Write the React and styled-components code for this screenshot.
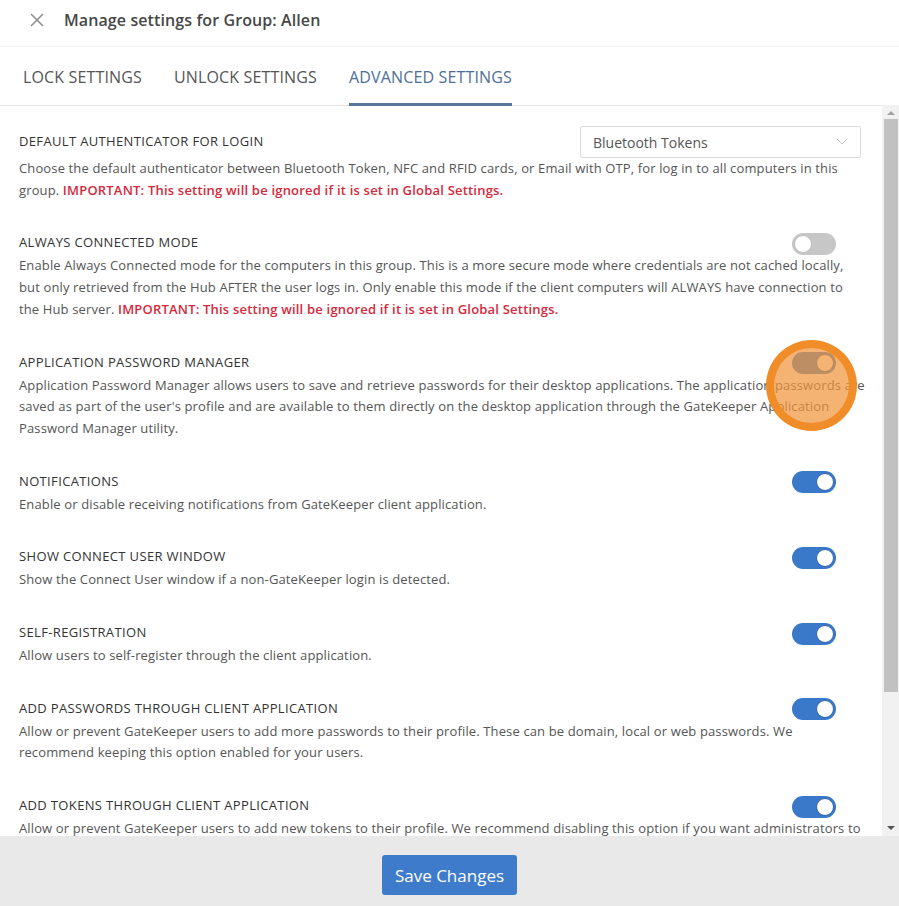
import React from 'react'
import styled, { createGlobalStyle } from 'styled-components'

const GlobalStyle = createGlobalStyle`
  html, body {
    margin: 0;
    padding: 0;
    background: #fff;
  }
  body {
    font-family: "Open Sans", "Noto Sans", sans-serif;
    color: #333;
  }
`

const Page = styled.div`
  display: flex;
  flex-direction: column;
  width: 899px;
  height: 906px;
  overflow: hidden;
`

const Header = styled.div`
  display: flex;
  align-items: center;
  height: 47px;
  padding-left: 29px;
  padding-bottom: 6px;
  gap: 19px;
  border-bottom: 1px solid #f1f1f1;
  box-sizing: border-box;
  flex-shrink: 0;
`

const Title = styled.h1`
  margin: 0;
  font-size: 16px;
  font-weight: 600;
  color: #474747;
  letter-spacing: 0.1px;
`

const CloseButton = styled.button`
  border: none;
  background: none;
  padding: 0;
  display: flex;
  cursor: pointer;
`

const TabBar = styled.div`
  display: flex;
  height: 59px;
  padding-left: 23px;
  gap: 32px;
  margin-right: 17px;
  border-bottom: 1px solid #e6e6e6;
  box-sizing: border-box;
  flex-shrink: 0;
`

const Tab = styled.div`
  display: flex;
  align-items: center;
  font-size: 16px;
  letter-spacing: 0.15px;
  color: ${p => (p.$active ? '#4e6f97' : '#555')};
  border-bottom: 3px solid ${p => (p.$active ? '#5a7599' : 'transparent')};
  padding-top: 3px;
  box-sizing: border-box;
  margin-bottom: -1px;
`

const Body = styled.div`
  display: flex;
  flex: 1;
  min-height: 0;
`

const Scroller = styled.div`
  flex: 1;
  overflow: hidden;
  padding: 20px 17px 0 19px;
`

const Scrollbar = styled.div`
  width: 17px;
  background: #f1f1f1;
  display: flex;
  flex-direction: column;
  align-items: center;
  margin-top: -1px;
`

const Arrow = styled.div`
  width: 0;
  height: 0;
  border-left: 4px solid transparent;
  border-right: 4px solid transparent;
  ${p => (p.$down ? 'border-top: 4px solid #555;' : 'border-bottom: 4px solid #a3a3a3;')}
  margin: ${p => (p.$down ? 'auto 0 6px' : '6px 0 0')};
`

const Thumb = styled.div`
  width: 14px;
  height: 573px;
  background: #c1c1c1;
  margin-top: 4px;
`

const Section = styled.div`
  padding-bottom: 31px;
`

const SectionHead = styled.div`
  display: flex;
  align-items: center;
  justify-content: space-between;
  min-height: 23px;
`

const SectionTitle = styled.div`
  font-size: 13px;
  line-height: 23px;
  padding-bottom: 1px;
  margin-top: -1px;
  letter-spacing: 0.35px;
  color: #333;
`

const Description = styled.div`
  font-size: 13px;
  line-height: 21.7px;
  letter-spacing: 0.13px;
  color: #555;
`

const Important = styled.span`
  color: #d6293b;
  font-weight: 600;
  letter-spacing: 0.2px;
`

const Select = styled.div`
  display: flex;
  align-items: center;
  justify-content: space-between;
  width: 281px;
  height: 32px;
  margin-right: 4px;
  box-sizing: border-box;
  border: 1px solid #dcdcdc;
  border-radius: 2px;
  padding: 0 12px 0 12px;
  font-size: 14px;
  color: #555;
`

const SwitchWrap = styled.div`
  position: relative;
  margin-right: 29px;
`

const Switch = styled.div`
  position: relative;
  width: 44px;
  height: 22px;
  border-radius: 11px;
  background: ${p => (p.$on ? '#3a78c9' : '#c7c7c7')};
`

const Knob = styled.div`
  position: absolute;
  top: 2px;
  left: ${p => (p.$on ? '24px' : '2px')};
  width: 18px;
  height: 18px;
  border-radius: 50%;
  background: #fff;
  box-sizing: border-box;
  border: 1px solid ${p => (p.$on ? '#2f64a8' : '#bdbdbd')};
`

const Highlight = styled.div`
  position: absolute;
  left: -26px;
  top: -12px;
  width: 91px;
  height: 91px;
  box-sizing: border-box;
  border-radius: 50%;
  border: 8px solid rgba(239, 139, 38, 0.96);
  background: rgba(240, 150, 60, 0.72);
  pointer-events: none;
`

const Footer = styled.div`
  height: 70px;
  background: #e9e9e9;
  display: flex;
  justify-content: center;
  align-items: center;
  flex-shrink: 0;
`

const SaveButton = styled.button`
  width: 135px;
  height: 40px;
  border: none;
  border-radius: 3px;
  background: #3e7ccb;
  color: #fff;
  font-family: "Open Sans", "Noto Sans", sans-serif;
  font-size: 17px;
  margin-top: 8px;
`

const Toggle = ({ on, highlight }) => (
  <SwitchWrap>
    <Switch $on={on}>
      <Knob $on={on} />
    </Switch>
    {highlight && <Highlight />}
  </SwitchWrap>
)

const IMPORTANT = 'IMPORTANT: This setting will be ignored if it is set in Global Settings.'

const settings = [
  {
    title: 'ALWAYS CONNECTED MODE',
    on: false,
    text: 'Enable Always Connected mode for the computers in this group. This is a more secure mode where credentials are not cached locally, but only retrieved from the Hub AFTER the user logs in. Only enable this mode if the client computers will ALWAYS have connection to the Hub server. ',
    important: true,
  },
  {
    title: 'APPLICATION PASSWORD MANAGER',
    on: true,
    highlight: true,
    text: "Application Password Manager allows users to save and retrieve passwords for their desktop applications. The application passwords are saved as part of the user's profile and are available to them directly on the desktop application through the GateKeeper Application Password Manager utility.",
  },
  {
    title: 'NOTIFICATIONS',
    on: true,
    text: 'Enable or disable receiving notifications from GateKeeper client application.',
  },
  {
    title: 'SHOW CONNECT USER WINDOW',
    on: true,
    text: 'Show the Connect User window if a non-GateKeeper login is detected.',
  },
  {
    title: 'SELF-REGISTRATION',
    on: true,
    text: 'Allow users to self-register through the client application.',
  },
  {
    title: 'ADD PASSWORDS THROUGH CLIENT APPLICATION',
    on: true,
    text: 'Allow or prevent GateKeeper users to add more passwords to their profile. These can be domain, local or web passwords. We recommend keeping this option enabled for your users.',
  },
  {
    title: 'ADD TOKENS THROUGH CLIENT APPLICATION',
    on: true,
    text: 'Allow or prevent GateKeeper users to add new tokens to their profile. We recommend disabling this option if you want administrators to be the only ones who can assign tokens to users.',
  },
]

export default function App() {
  return (
    <Page>
      <GlobalStyle />
      <Header>
        <CloseButton>
          <svg width="16" height="16" viewBox="0 0 16 16">
            <path d="M2 2L14 14M14 2L2 14" stroke="#8c8c8c" strokeWidth="1.5" />
          </svg>
        </CloseButton>
        <Title>Manage settings for Group: Allen</Title>
      </Header>
      <TabBar>
        <Tab>LOCK SETTINGS</Tab>
        <Tab>UNLOCK SETTINGS</Tab>
        <Tab $active>ADVANCED SETTINGS</Tab>
      </TabBar>
      <Body>
        <Scroller>
          <Section>
            <SectionHead>
              <SectionTitle>DEFAULT AUTHENTICATOR FOR LOGIN</SectionTitle>
              <Select>
                Bluetooth Tokens
                <svg width="12" height="8" viewBox="0 0 12 8">
                  <path d="M1 1L6 6L11 1" stroke="#c4c4c4" fill="none" strokeWidth="1" />
                </svg>
              </Select>
            </SectionHead>
            <Description>
              Choose the default authenticator between Bluetooth Token, NFC and RFID cards, or Email with OTP, for log in to all computers in this group.{' '}
              <Important>{IMPORTANT}</Important>
            </Description>
          </Section>
          {settings.map(s => (
            <Section key={s.title}>
              <SectionHead>
                <SectionTitle>{s.title}</SectionTitle>
                <Toggle on={s.on} highlight={s.highlight} />
              </SectionHead>
              <Description>
                {s.text}
                {s.important && <Important>{IMPORTANT}</Important>}
              </Description>
            </Section>
          ))}
        </Scroller>
        <Scrollbar>
          <Arrow />
          <Thumb />
          <Arrow $down />
        </Scrollbar>
      </Body>
      <Footer>
        <SaveButton>Save Changes</SaveButton>
      </Footer>
    </Page>
  )
}
